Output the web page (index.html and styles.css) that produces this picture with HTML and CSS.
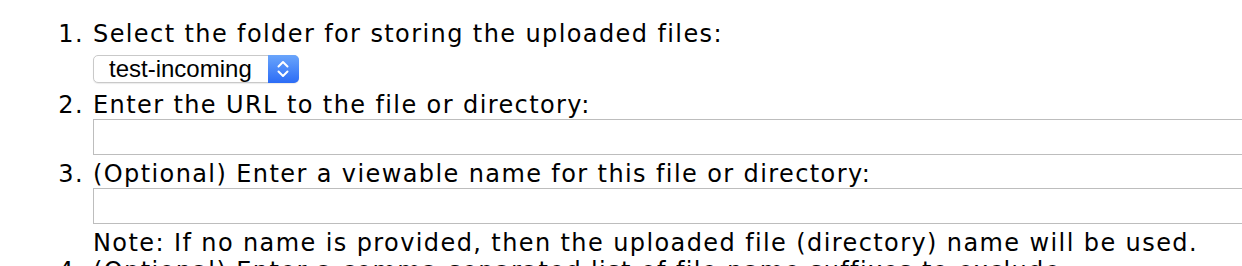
FILE: index.html
```html
<!DOCTYPE html>
<html>
<head>
<meta charset="utf-8">
<link rel="stylesheet" href="styles.css">
</head>
<body>
<ol class="steps">
  <li>
    <div class="label">Select the folder for storing the uploaded files:</div>
    <div class="select">
      <span class="select-text">test-incoming</span>
      <span class="select-arrows">
        <svg width="14" height="20" viewBox="0 0 14 20"><path d="M2.5 7.5 L7 3 L11.5 7.5 M2.5 12.5 L7 17 L11.5 12.5" fill="none" stroke="#fff" stroke-width="2" stroke-linecap="round" stroke-linejoin="round"/></svg>
      </span>
    </div>
  </li>
  <li>
    <div class="label">Enter the URL to the file or directory:</div>
    <input class="field" type="text">
  </li>
  <li>
    <div class="label">(Optional) Enter a viewable name for this file or directory:</div>
    <input class="field" type="text">
    <div class="label">Note: If no name is provided, then the uploaded file (directory) name will be used.</div>
  </li>
  <li>
    <div class="label">(Optional) Enter a comma-separated list of file name suffixes to exclude:</div>
  </li>
</ol>
</body>
</html>
```

FILE: styles.css
```css
html, body {
  margin: 0;
  padding: 0;
  overflow: hidden;
  background: #fff;
}
body {
  font-family: "DejaVu Sans", Verdana, sans-serif;
  font-size: 24px;
  line-height: 28px;
  letter-spacing: 1.4px;
  color: #000;
}
.steps {
  margin: 20px 0 0 0;
  padding-left: 93px;
  width: 1400px;
}
.label {
  white-space: nowrap;
}
.select {
  display: inline-flex;
  align-items: stretch;
  margin: 7px 0 8px 0;
  height: 28px;
  box-sizing: border-box;
  border: 1px solid #c9c9c9;
  border-radius: 5px;
  background: #fff;
  box-shadow: 0 1px 1px rgba(0,0,0,0.08);
  font-family: "Liberation Sans", Arial, sans-serif;
  font-size: 24px;
  letter-spacing: 0;
}
.select-text {
  padding: 0 16px 0 15px;
  line-height: 26px;
}
.select-arrows {
  width: 31px;
  display: flex;
  align-items: center;
  justify-content: center;
  margin: -1px -1px -1px 0;
  border-radius: 0 5px 5px 0;
  background: linear-gradient(#6aa5fb, #2b6cf6);
}
.field {
  display: block;
  box-sizing: border-box;
  width: 1300px;
  height: 36px;
  margin: 0 0 5px 0;
  border: 1px solid #bdbdbd;
  padding: 0 4px;
  font: inherit;
  background: #fff;
}
```
